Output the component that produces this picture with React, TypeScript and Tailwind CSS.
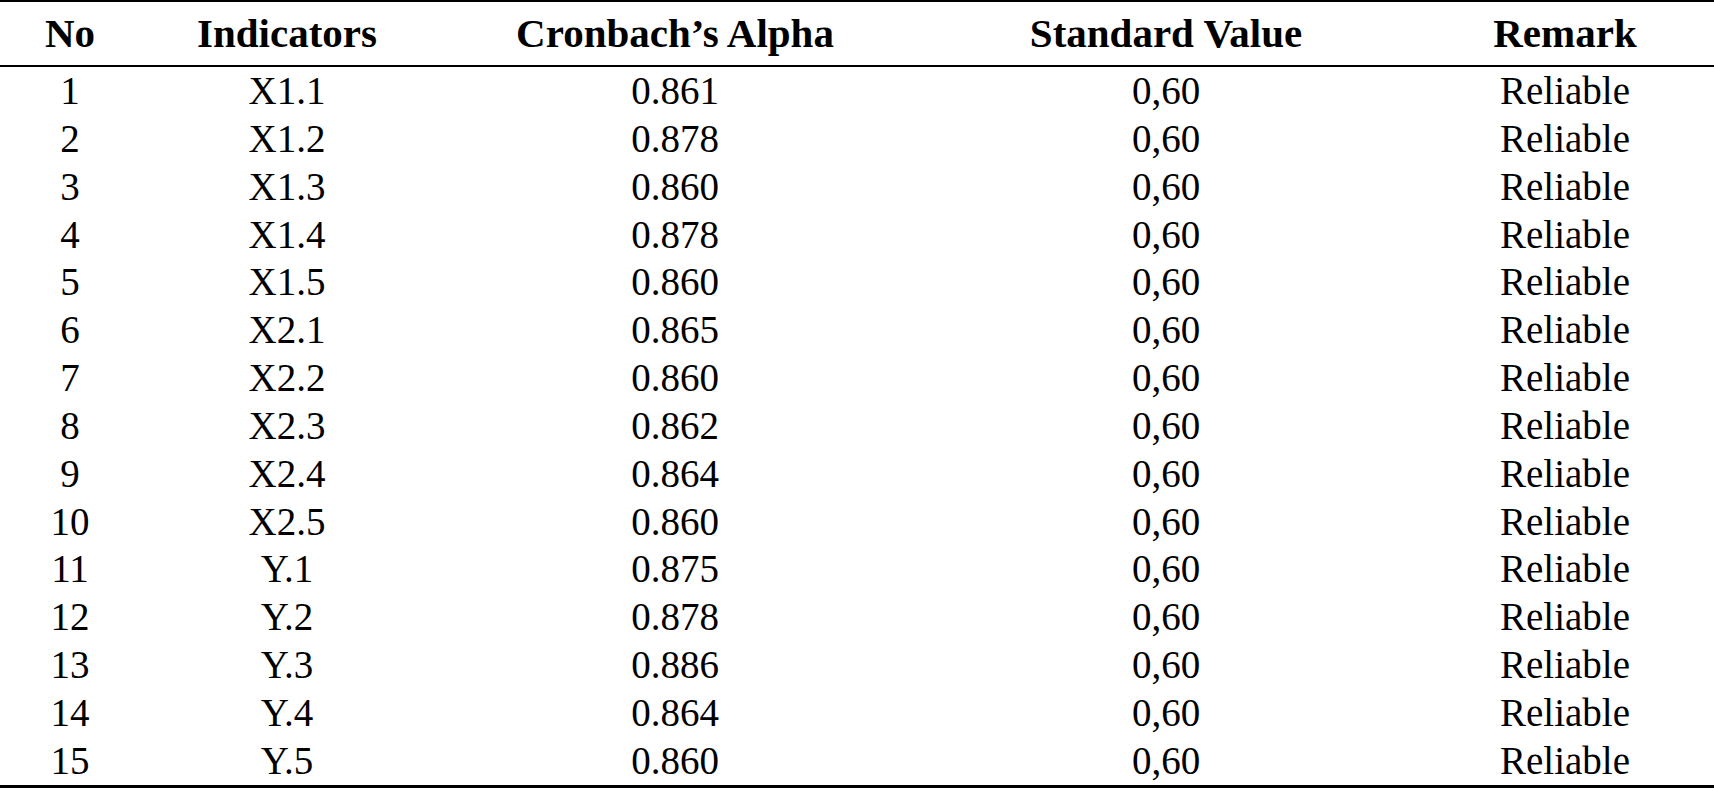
const rows: [string, string, string][] = [
  ['1', 'X1.1', '0.861'],
  ['2', 'X1.2', '0.878'],
  ['3', 'X1.3', '0.860'],
  ['4', 'X1.4', '0.878'],
  ['5', 'X1.5', '0.860'],
  ['6', 'X2.1', '0.865'],
  ['7', 'X2.2', '0.860'],
  ['8', 'X2.3', '0.862'],
  ['9', 'X2.4', '0.864'],
  ['10', 'X2.5', '0.860'],
  ['11', 'Y.1', '0.875'],
  ['12', 'Y.2', '0.878'],
  ['13', 'Y.3', '0.886'],
  ['14', 'Y.4', '0.864'],
  ['15', 'Y.5', '0.860'],
];

const cols = 'grid grid-cols-[140px_294px_482px_500px_1fr] text-center';

export default function App() {
  return (
    <div className="w-[1714px] h-[788px] bg-white text-black font-['Liberation_Serif','Times_New_Roman',serif]">
      <div className="border-t-2 border-b-[3px] border-black">
        <div className={`${cols} h-[65px] leading-[63px] text-[41px] font-bold border-b-2 border-black`}>
          <div>No</div>
          <div>Indicators</div>
          <div>Cronbach’s Alpha</div>
          <div>Standard Value</div>
          <div>Remark</div>
        </div>
        {rows.map(([no, ind, alpha]) => (
          <div key={no} className={`${cols} h-[47.85px] leading-[47.85px] text-[39px]`}>
            <div>{no}</div>
            <div>{ind}</div>
            <div>{alpha}</div>
            <div>0,60</div>
            <div>Reliable</div>
          </div>
        ))}
      </div>
    </div>
  );
}
